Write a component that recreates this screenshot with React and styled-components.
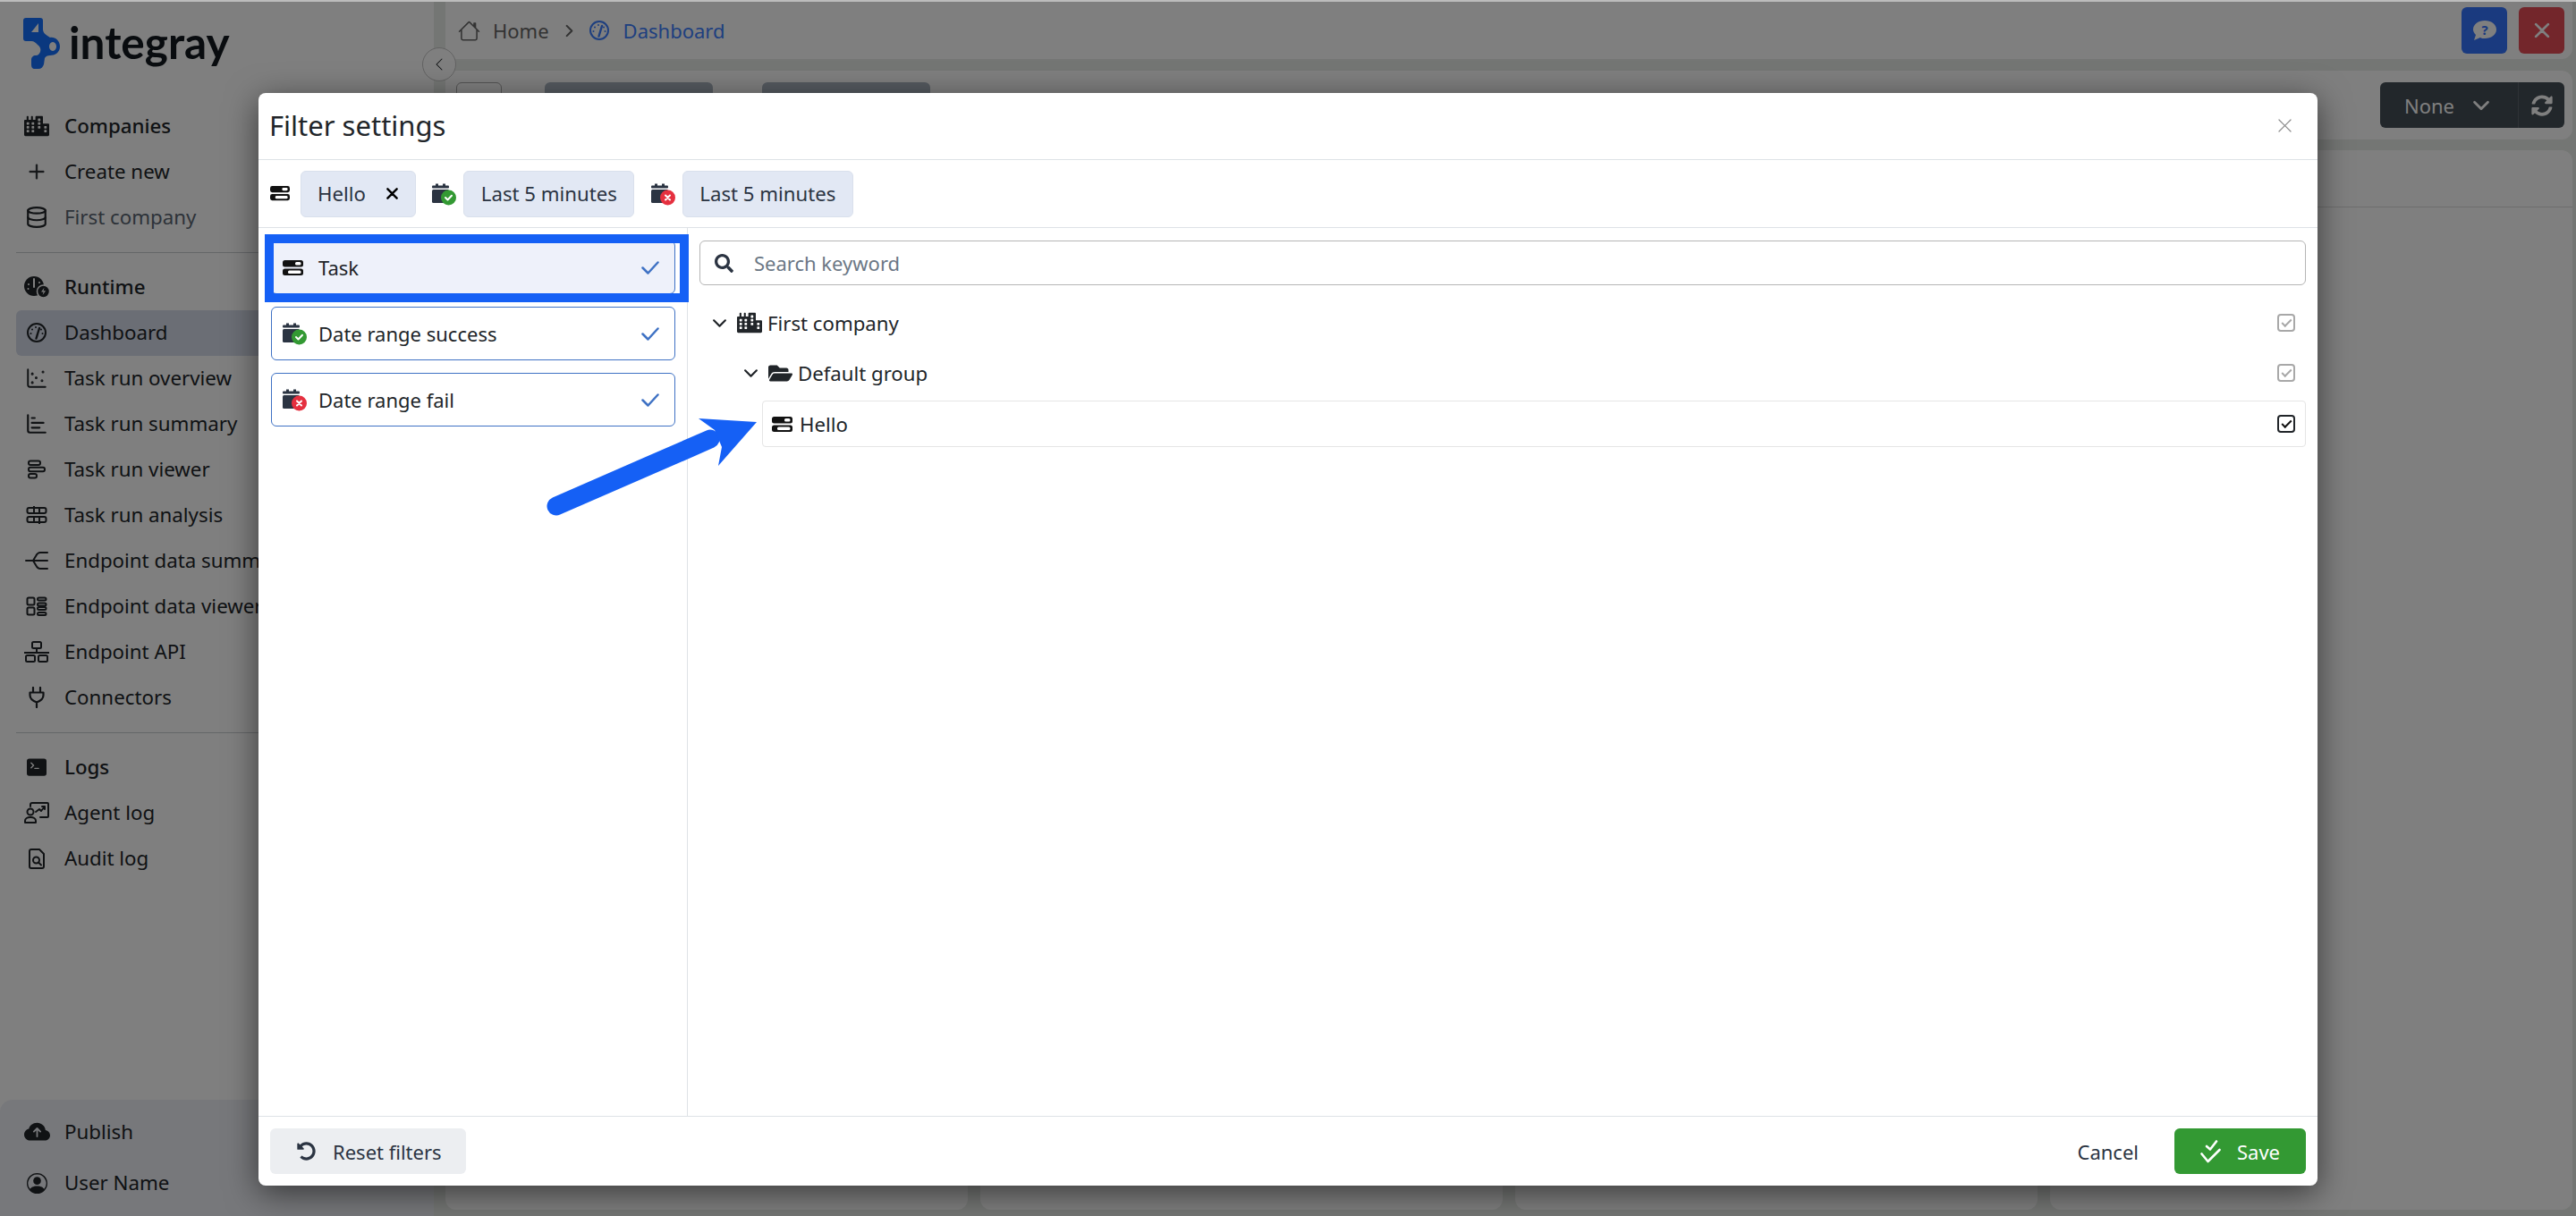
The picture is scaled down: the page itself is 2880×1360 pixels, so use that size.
import styled, { createGlobalStyle } from "styled-components";
import {
  BsPlusLg,
  BsTerminalFill,
  BsCloudArrowUpFill,
  BsPersonCircle,
  BsChevronDown,
  BsChevronLeft,
  BsChevronRight,
  BsXLg,
  BsHouse,
} from "react-icons/bs";
import { FaCity, FaFolderOpen, FaSearch, FaSyncAlt, FaUndoAlt } from "react-icons/fa";
import { LuDatabase } from "react-icons/lu";
import { ChartScatter, ChartBar } from "lucide-react";

const GlobalStyle = createGlobalStyle`
  html, body {
    margin: 0;
    padding: 0;
    height: 100%;
    overflow: hidden;
    font-family: "Noto Sans", "Open Sans", sans-serif;
    color: #212529;
  }
`;

/* drawn icons */

function GaugeIcon({ size = 24 }) {
  return (
    <svg width={size} height={size} viewBox="0 0 24 24" fill="none" stroke="currentColor" strokeWidth="2" strokeLinecap="round">
      <circle cx="12" cy="12" r="10" />
      <path d="M11.5 18.5 15 7" strokeWidth="2.4" />
      <path d="M7 8.5h.01M5.5 13h.01M11 6h.01M18.5 13h.01M17 8.5h.01" />
    </svg>
  );
}

function RuntimeIcon() {
  return (
    <svg width="29" height="25" viewBox="0 0 29 25">
      <circle cx="11" cy="11" r="11" fill="currentColor" />
      <path d="M11 3v9M5 9h.01M4.5 14h.01M17 7h.01" stroke="#fff" strokeWidth="2" strokeLinecap="round" />
      <circle cx="21.5" cy="17" r="7" fill="currentColor" stroke="#fff" strokeWidth="1.5" />
      <path d="M22.5 12.8 19 17.6h2.6l-1 3.4 3.5-4.8h-2.6z" fill="#fff" />
    </svg>
  );
}

function ViewerIcon() {
  return (
    <svg width="22" height="22" viewBox="0 0 22 22" fill="none" stroke="currentColor" strokeWidth="2">
      <rect x="2" y="1.5" width="13" height="4.5" rx="2" />
      <rect x="2" y="8.8" width="18" height="4.5" rx="2" />
      <rect x="2" y="16" width="9" height="4.5" rx="2" />
    </svg>
  );
}

function AnalysisIcon() {
  return (
    <svg width="24" height="22" viewBox="0 0 24 22" fill="none" stroke="currentColor" strokeWidth="2">
      <rect x="1.5" y="3" width="21" height="6" rx="2" />
      <rect x="1.5" y="13" width="21" height="6" rx="2" />
      <path d="M9 1v8M15 3v6M15 13v8M9 13v6" />
    </svg>
  );
}

function ForkIcon() {
  return (
    <svg width="26" height="22" viewBox="0 0 26 22" fill="none" stroke="currentColor" strokeWidth="2" strokeLinecap="round">
      <path d="M1 11h24M25 2h-8c-3 0-4 2-5 4l-3 5 3 5c1 2 2 4 5 4h8" />
    </svg>
  );
}

function TilesIcon() {
  return (
    <svg width="24" height="22" viewBox="0 0 24 22" fill="none" stroke="currentColor" strokeWidth="2">
      <rect x="1.5" y="1.5" width="8" height="8" rx="1.5" />
      <rect x="1.5" y="12.5" width="8" height="8" rx="1.5" />
      <rect x="13" y="1.5" width="9.5" height="3" rx="1.5" />
      <rect x="13" y="7.5" width="9.5" height="3" rx="1.5" />
      <rect x="13" y="12" width="9.5" height="3" rx="1.5" />
      <rect x="13" y="18" width="9.5" height="3" rx="1.5" />
    </svg>
  );
}

function NetworkIcon() {
  return (
    <svg width="28" height="24" viewBox="0 0 28 24" fill="none" stroke="currentColor" strokeWidth="2">
      <rect x="9" y="1" width="10" height="7" rx="1.5" />
      <path d="M14 8v5M0 13h28" />
      <rect x="2" y="16" width="10" height="7" rx="1.5" />
      <rect x="16" y="16" width="10" height="7" rx="1.5" />
    </svg>
  );
}

function PlugIcon() {
  return (
    <svg width="18" height="24" viewBox="0 0 18 24" fill="none" stroke="currentColor" strokeWidth="2.2" strokeLinecap="round" strokeLinejoin="round">
      <path d="M5 1v5M13 1v5M1.5 6.5h15v3c0 3-2 6-7.5 8C3.500 15.500 1.500 12.500 1.500 9.500zM9 17.500V23" />
    </svg>
  );
}

function AgentIcon() {
  return (
    <svg width="28" height="24" viewBox="0 0 28 24" fill="none" stroke="currentColor" strokeWidth="2" strokeLinecap="round" strokeLinejoin="round">
      <path d="M7 5V3a2 2 0 0 1 2-2h17a1 1 0 0 1 1 1v14a1 1 0 0 1-1 1h-8" />
      <path d="m13 11 4-3 2 2 4-5M20 5h3v3" />
      <circle cx="7" cy="11" r="3.500" />
      <path d="M1 23v-2c0-2 2-4 6-4s6 2 6 4v2z" />
    </svg>
  );
}

function AuditIcon() {
  return (
    <svg width="18" height="23" viewBox="0 0 18 23" fill="none" stroke="currentColor" strokeWidth="2" strokeLinecap="round" strokeLinejoin="round">
      <path d="M3 1h9l5 5v14a2 2 0 0 1-2 2H3a2 2 0 0 1-2-2V3a2 2 0 0 1 2-2z" />
      <circle cx="8.500" cy="13" r="3.500" />
      <path d="m11 15.500 3 3" />
    </svg>
  );
}

function TaskIcon({ width = 23 }) {
  return (
    <svg width={width} height={(width * 17) / 23} viewBox="0 0 23 17">
      <rect width="23" height="7.500" rx="2.500" fill="#111" />
      <rect x="14" y="2" width="6.500" height="3.500" rx="1.500" fill="#fff" />
      <rect y="9.500" width="23" height="7.500" rx="2.500" fill="#111" />
      <rect x="6" y="11.500" width="14.500" height="3.500" rx="1.500" fill="#fff" />
    </svg>
  );
}

function DateIcon({ ok }) {
  return (
    <svg width="27" height="26" viewBox="0 0 27 26">
      <path d="M4 1.500h3v3H4zM12 1.500h3v3h-3z" fill="#2b3442" />
      <rect y="3.500" width="19" height="3" rx="1" fill="#2b3442" />
      <rect y="8" width="19" height="15" rx="1.500" fill="#2b3442" />
      <circle cx="18.500" cy="17" r="8.500" fill={ok ? "#339933" : "#e5303f"} />
      {ok ? (
        <path d="m15 17 2.500 2.500 4.500-4.800" fill="none" stroke="#fff" strokeWidth="2" strokeLinecap="round" strokeLinejoin="round" />
      ) : (
        <path d="m16 14.500 5 5M21 14.500l-5 5" fill="none" stroke="#fff" strokeWidth="2" strokeLinecap="round" />
      )}
    </svg>
  );
}

function ThinCheck() {
  return (
    <svg width="20" height="15" viewBox="0 0 20 15" fill="none" stroke="#3f72c4" strokeWidth="2.500" strokeLinecap="round" strokeLinejoin="round">
      <path d="m1.500 7.500 6 6L18.500 1.500" />
    </svg>
  );
}

function DoubleCheck() {
  return (
    <svg width="23" height="26" viewBox="0 0 23 26" fill="none" stroke="#fff" strokeWidth="2.600" strokeLinecap="round" strokeLinejoin="round">
      <path d="m7 7 4 3.500L18 1.500M1.500 15.500 8.500 24 21.500 11" />
    </svg>
  );
}

function HelpIcon() {
  return (
    <svg width="28" height="24" viewBox="0 0 28 24">
      <path d="M14 1c7 0 13 4 13 10s-6 10-13 10c-2 0-4 0-5-1l-7 3 2-6c-2-2-3-4-3-6C1 5 7 1 14 1z" fill="#fff" />
      <text x="14" y="17" textAnchor="middle" fontSize="15" fontWeight="700" fontFamily="Noto Sans" fill="#3474ff">?</text>
    </svg>
  );
}

function Logo() {
  return (
    <svg width="41" height="57" viewBox="0 0 41 57">
      <path
        fillRule="evenodd"
        fill="#1570ff"
        d="M3 0H19a3 3 0 0 1 3 3V13c0 3 2 5 5 7l3 2c5-1 11 3 11 10s-6 10-11 10c-3 0-5 1-6 3l-1 7c-1 3-3 5-6 5h-4c-3 0-4-2-4-5v-5c0-3 2-5 5-5 3 0 4-2 5-4 1-3 0-6-3-8-2-2-4-4-7-4H3c-2 0-3-1-3-3V3c0-2 1-3 3-3ZM17 6v10H9ZM33 27a4 5 0 1 0 .01 0Z"
      />
    </svg>
  );
}

/* data */

const companyRows = [
  { label: "Companies", icon: <FaCity size={28} />, head: true },
  { label: "Create new", icon: <BsPlusLg size={22} strokeWidth={0.6} /> },
  { label: "First company", icon: <LuDatabase size={26} />, muted: true },
];

const runtimeRows = [
  { label: "Runtime", icon: <RuntimeIcon />, head: true },
  { label: "Dashboard", icon: <GaugeIcon />, active: true },
  { label: "Task run overview", icon: <ChartScatter size={26} strokeWidth={1.800} /> },
  { label: "Task run summary", icon: <ChartBar size={26} strokeWidth={2} /> },
  { label: "Task run viewer", icon: <ViewerIcon /> },
  { label: "Task run analysis", icon: <AnalysisIcon /> },
  { label: "Endpoint data summary", icon: <ForkIcon /> },
  { label: "Endpoint data viewer", icon: <TilesIcon /> },
  { label: "Endpoint API", icon: <NetworkIcon /> },
  { label: "Connectors", icon: <PlugIcon /> },
];

const logRows = [
  { label: "Logs", icon: <BsTerminalFill size={22} />, head: true },
  { label: "Agent log", icon: <AgentIcon /> },
  { label: "Audit log", icon: <AuditIcon /> },
];

const filterItems = [
  { label: "Task", icon: <TaskIcon />, active: true },
  { label: "Date range success", icon: <DateIcon ok /> },
  { label: "Date range fail", icon: <DateIcon /> },
];

function NavGroup({ rows }) {
  return rows.map((row) => (
    <NavRow key={row.label} $active={row.active} $head={row.head} $muted={row.muted}>
      <NavIcon>{row.icon}</NavIcon>
      <NavLabel>{row.label}</NavLabel>
    </NavRow>
  ));
}

export default function App() {
  return (
    <>
      <GlobalStyle />
      <Page>
        <Sidebar>
          <Brand>
            <Logo />
            <BrandName>integray</BrandName>
          </Brand>
          <NavGroup rows={companyRows} />
          <NavDivider />
          <NavGroup rows={runtimeRows} />
          <NavDivider />
          <NavGroup rows={logRows} />
          <SidebarFooter>
            <FooterRow>
              <NavIcon><BsCloudArrowUpFill size={29} /></NavIcon>
              <NavLabel>Publish</NavLabel>
            </FooterRow>
            <FooterRow>
              <NavIcon><BsPersonCircle size={23} /></NavIcon>
              <NavLabel>User Name</NavLabel>
            </FooterRow>
          </SidebarFooter>
        </Sidebar>
        <CollapseButton><BsChevronLeft size={16} /></CollapseButton>

        <Main>
          <TopBar>
            <Crumbs>
              <BsHouse size={25} />
              <Crumb>Home</Crumb>
              <BsChevronRight size={15} strokeWidth={1.2} />
              <CrumbCurrent>
                <GaugeIcon size={24} />
                <span>Dashboard</span>
              </CrumbCurrent>
            </Crumbs>
            <TopActions>
              <SquareButton $bg="#3474ff"><HelpIcon /></SquareButton>
              <SquareButton $bg="#e64c56"><BsXLg size={20} strokeWidth={1.2} /></SquareButton>
            </TopActions>
          </TopBar>

          <ToolBar>
            <OutlineButton />
            <GreyButton />
            <GreyButton $gap={7} />
            <RangeGroup>
              <RangeSelect>
                None
                <BsChevronDown size={20} strokeWidth={1.2} />
              </RangeSelect>
              <RefreshButton><FaSyncAlt size={24} /></RefreshButton>
            </RangeGroup>
          </ToolBar>

          <CardGrid>
            {[0, 1, 2, 3].map((i) => (
              <Card key={i}>
                <CardHeader />
              </Card>
            ))}
          </CardGrid>
        </Main>

        <Backdrop>
          <Modal>
            <ModalHeader>
              <ModalTitle>Filter settings</ModalTitle>
              <CloseButton><BsXLg size={19} /></CloseButton>
            </ModalHeader>

            <ChipRow>
              <ChipGroup>
                <TaskIcon width={22} />
                <Chip $tight>
                  Hello
                  <BsXLg size={15} strokeWidth={1.6} color="#000" />
                </Chip>
              </ChipGroup>
              <ChipGroup $tight>
                <DateIcon ok />
                <Chip>Last 5 minutes</Chip>
              </ChipGroup>
              <ChipGroup $tight>
                <DateIcon />
                <Chip>Last 5 minutes</Chip>
              </ChipGroup>
            </ChipRow>

            <ModalBody>
              <FilterColumn>
                {filterItems.map((item) => (
                  <FilterItem key={item.label} $active={item.active}>
                    <FilterIcon>{item.icon}</FilterIcon>
                    <FilterLabel>{item.label}</FilterLabel>
                    <ThinCheck />
                  </FilterItem>
                ))}
              </FilterColumn>

              <TreeColumn>
                <SearchBox>
                  <FaSearch size={21} color="#2b3442" />
                  <SearchPlaceholder>Search keyword</SearchPlaceholder>
                </SearchBox>

                <TreeRow $indent={14}>
                  <BsChevronDown size={17} strokeWidth={1} />
                  <TreeIcon><FaCity size={28} color="#212529" /></TreeIcon>
                  <TreeLabel>First company</TreeLabel>
                  <Checkbox />
                </TreeRow>
                <TreeRow $indent={49}>
                  <BsChevronDown size={17} strokeWidth={1} />
                  <TreeIcon><FaFolderOpen size={27} color="#212529" /></TreeIcon>
                  <TreeLabel>Default group</TreeLabel>
                  <Checkbox />
                </TreeRow>
                <LeafRow>
                  <TaskIcon />
                  <TreeLabel>Hello</TreeLabel>
                  <Checkbox $on />
                </LeafRow>
              </TreeColumn>
            </ModalBody>

            <ModalFooter>
              <ResetButton>
                <FaUndoAlt size={21} />
                Reset filters
              </ResetButton>
              <FooterActions>
                <CancelButton>Cancel</CancelButton>
                <SaveButton>
                  <DoubleCheck />
                  Save
                </SaveButton>
              </FooterActions>
            </ModalFooter>

            <Highlight />
            <ArrowMark viewBox="0 0 260 120" width="260" height="120">
              <path d="M23 104 L195 29" stroke="#1560f5" strokeWidth="21" strokeLinecap="round" fill="none" />
              <path d="M247 10 L182 6 L200 19 L208 38 L204 59 Z" fill="#1560f5" />
            </ArrowMark>
          </Modal>
        </Backdrop>
      </Page>
    </>
  );
}

/* page behind the dialog */

const Page = styled.div`
  position: relative;
  display: flex;
  width: 2880px;
  height: 1360px;
  box-sizing: border-box;
  border-top: 2px solid #bcbcbc;
  overflow: hidden;
  background: #e8ece8;
`;

const Sidebar = styled.aside`
  display: flex;
  flex-direction: column;
  flex: none;
  width: 485px;
  height: 100%;
  box-sizing: border-box;
  padding-left: 18px;
  background: #fff;
  overflow: hidden;
`;

const Brand = styled.div`
  display: flex;
  align-items: flex-start;
  gap: 10px;
  height: 113.500px;
  margin-left: 8px;
  padding-top: 18px;
  box-sizing: border-box;
  flex: none;
`;

const BrandName = styled.span`
  font-family: "Lato", sans-serif;
  font-size: 49.500px;
  font-weight: 700;
  line-height: 1;
  margin-top: 3px;
  color: #12181f;
`;

const NavRow = styled.div`
  display: flex;
  align-items: center;
  gap: 15px;
  flex: none;
  height: 51px;
  padding-left: 7px;
  border-radius: 6px 0 0 6px;
  white-space: nowrap;
  font-size: 22.300px;
  font-weight: ${(p) => (p.$head ? 500 : 400)};
  color: ${(p) => (p.$muted ? "#5b6673" : "#212529")};
  background: ${(p) => (p.$active ? "#d6dcea" : "transparent")};
`;

const NavIcon = styled.span`
  display: flex;
  align-items: center;
  justify-content: center;
  width: 32px;
  flex: none;
  color: #212529;
`;

const NavLabel = styled.span`
  line-height: 1;
`;

const NavDivider = styled.div`
  flex: none;
  height: 1px;
  margin: 13px 0 13px;
  background: #c9ccd0;
`;

const SidebarFooter = styled.div`
  display: flex;
  flex-direction: column;
  margin: auto 0 0 -18px;
  height: 130px;
  padding: 8px 0 0 25px;
  box-sizing: border-box;
  border-radius: 14px 0 0 0;
  background: #eef0f6;
`;

const FooterRow = styled.div`
  display: flex;
  align-items: center;
  gap: 15px;
  height: 57px;
  font-size: 22.300px;
  white-space: nowrap;
`;

const CollapseButton = styled.div`
  position: absolute;
  left: 472px;
  top: 51px;
  display: flex;
  align-items: center;
  justify-content: center;
  width: 38px;
  height: 38px;
  box-sizing: border-box;
  border: 1px solid #c4c4c4;
  border-radius: 50%;
  background: #fff;
`;

const Main = styled.main`
  display: flex;
  flex-direction: column;
  flex: 1;
  min-width: 0;
  padding: 0 4px 7px 13px;
  box-sizing: border-box;
`;

const TopBar = styled.header`
  display: flex;
  align-items: center;
  justify-content: space-between;
  flex: none;
  height: 64px;
  padding: 0 9px 0 14px;
  box-sizing: border-box;
  border-radius: 0 0 12px 12px;
  background: #fff;
`;

const Crumbs = styled.nav`
  display: flex;
  align-items: center;
  gap: 14px;
  font-size: 22px;
  color: #666;
`;

const Crumb = styled.span`
  margin-right: 1px;
`;

const CrumbCurrent = styled.span`
  display: flex;
  align-items: center;
  gap: 15px;
  color: #3d7eff;
`;

const TopActions = styled.div`
  display: flex;
  gap: 13px;
`;

const SquareButton = styled.div`
  display: flex;
  align-items: center;
  justify-content: center;
  width: 51px;
  height: 52px;
  border-radius: 6px;
  color: #fff;
  background: ${(p) => p.$bg};
`;

const ToolBar = styled.div`
  display: flex;
  align-items: center;
  gap: 48px;
  flex: none;
  height: 77px;
  margin-top: 13px;
  padding: 0 9px 0 12px;
  box-sizing: border-box;
  border-radius: 12px;
  background: #fff;
`;

const OutlineButton = styled.div`
  width: 51px;
  height: 51px;
  box-sizing: border-box;
  border: 1px solid #aaa;
  border-radius: 6px;
`;

const GreyButton = styled.div`
  width: 188px;
  height: 51px;
  border-radius: 6px;
  background: #aab4c0;
  margin-left: ${(p) => p.$gap || 0}px;
`;

const RangeGroup = styled.div`
  display: flex;
  margin-left: auto;
  height: 51px;
  color: #fff;
`;

const RangeSelect = styled.div`
  display: flex;
  align-items: center;
  justify-content: center;
  gap: 20px;
  width: 154px;
  padding-right: 4px;
  box-sizing: border-box;
  font-size: 22px;
  border-radius: 6px 0 0 6px;
  background: #454e56;
`;

const RefreshButton = styled.div`
  display: flex;
  align-items: center;
  justify-content: center;
  width: 51px;
  border-left: 1px solid #5c646c;
  border-radius: 0 6px 6px 0;
  background: #454e56;
`;

const CardGrid = styled.div`
  display: grid;
  grid-template-columns: repeat(4, 1fr);
  gap: 14px;
  flex: 1;
  margin-top: 12px;
`;

const Card = styled.section`
  border-radius: 12px;
  background: #fff;
`;

const CardHeader = styled.div`
  height: 63px;
  border-bottom: 1px solid #ddd;
`;

/* dialog */

const Backdrop = styled.div`
  position: absolute;
  inset: 0;
  background: rgba(0, 0, 0, 0.5);
`;

const Modal = styled.div`
  position: absolute;
  left: 289px;
  top: 102px;
  display: flex;
  flex-direction: column;
  width: 2302px;
  height: 1222px;
  border-radius: 8px;
  background: #fff;
  box-shadow: 0 8px 36px rgba(0, 0, 0, 0.55);
`;

const ModalHeader = styled.div`
  display: flex;
  align-items: center;
  justify-content: space-between;
  flex: none;
  height: 75px;
  padding: 0 27px 2px 12px;
  box-sizing: border-box;
  border-bottom: 1px solid #dee2e6;
`;

const ModalTitle = styled.h2`
  margin: 0;
  font-size: 31px;
  font-weight: 400;
  line-height: 1;
  color: #212529;
`;

const CloseButton = styled.span`
  display: flex;
  color: #8a8a8a;
`;

const ChipRow = styled.div`
  display: flex;
  align-items: center;
  flex: none;
  height: 76px;
  padding-left: 13px;
  box-sizing: border-box;
  border-bottom: 1px solid #dee2e6;
`;

const ChipGroup = styled.div`
  display: flex;
  align-items: center;
  gap: ${(p) => (p.$tight ? 8 : 12)}px;
  margin-right: 18.500px;
`;

const Chip = styled.span`
  display: flex;
  align-items: center;
  gap: ${(p) => (p.$tight ? 22 : 0)}px;
  height: 52px;
  padding: 0 ${(p) => (p.$tight ? 18 : 18.5)}px;
  box-sizing: border-box;
  border: 1px solid #d9e0ec;
  border-radius: 6px;
  font-size: 22.200px;
  color: #2b3442;
  background: #e2e8f4;
`;

const ModalBody = styled.div`
  display: flex;
  flex: 1;
  min-height: 0;
`;

const FilterColumn = styled.div`
  display: flex;
  flex-direction: column;
  gap: 14px;
  flex: none;
  width: 480px;
  padding: 14px 13px 0 14px;
  box-sizing: border-box;
  border-right: 1px solid #dee2e6;
`;

const FilterItem = styled.div`
  display: flex;
  align-items: center;
  height: 60px;
  padding: 0 17px 0 12px;
  box-sizing: border-box;
  border: 1px solid #3f72c4;
  border-radius: 6px;
  background: ${(p) => (p.$active ? "#eef1fa" : "#fff")};
`;

const FilterIcon = styled.span`
  display: flex;
  width: 40px;
  flex: none;
`;

const FilterLabel = styled.span`
  flex: 1;
  font-size: 22px;
  color: #212529;
`;

const TreeColumn = styled.div`
  flex: 1;
  min-width: 0;
  padding: 14px 13px 0 13px;
`;

const SearchBox = styled.div`
  display: flex;
  align-items: center;
  gap: 23px;
  height: 50px;
  margin-bottom: 14px;
  padding-left: 16px;
  box-sizing: border-box;
  border: 1px solid #b5b5b5;
  border-radius: 6px;
`;

const SearchPlaceholder = styled.span`
  font-size: 22px;
  color: #6b7785;
`;

const TreeRow = styled.div`
  display: flex;
  align-items: center;
  height: 56px;
  padding: 0 12px 0 ${(p) => p.$indent}px;
  box-sizing: border-box;
`;

const TreeIcon = styled.span`
  display: flex;
  margin: 0 6px 0 11px;
`;

const TreeLabel = styled.span`
  flex: 1;
  font-size: 22.200px;
  color: #212529;
`;

const LeafRow = styled.div`
  display: flex;
  align-items: center;
  gap: 8px;
  height: 52px;
  margin: 3px 0 0 70px;
  padding: 0 11px 0 10px;
  box-sizing: border-box;
  border: 1px solid #e5e5e5;
  border-radius: 4px;
`;

const Checkbox = styled.span`
  display: flex;
  align-items: center;
  justify-content: center;
  width: 20px;
  height: 20px;
  box-sizing: border-box;
  border: 2.5px solid ${(p) => (p.$on ? "#212529" : "#a8a8a8")};
  border-radius: 4px;

  &::after {
    content: "";
    width: 9px;
    height: 4px;
    margin-top: -3px;
    border-left: 2.5px solid ${(p) => (p.$on ? "#111" : "#a8a8a8")};
    border-bottom: 2.5px solid ${(p) => (p.$on ? "#111" : "#a8a8a8")};
    transform: rotate(-45deg);
  }
`;

const ModalFooter = styled.div`
  display: flex;
  align-items: center;
  justify-content: space-between;
  flex: none;
  height: 78px;
  padding: 0 13px;
  box-sizing: border-box;
  border-top: 1px solid #dee2e6;
`;

const ResetButton = styled.div`
  display: flex;
  align-items: center;
  gap: 19px;
  height: 51px;
  padding: 0 27px 0 30px;
  border-radius: 6px;
  font-size: 22px;
  color: #2b3442;
  background: #eceef1;
`;

const FooterActions = styled.div`
  display: flex;
  align-items: center;
  gap: 40px;
`;

const CancelButton = styled.span`
  font-size: 22px;
  color: #2b3442;
`;

const SaveButton = styled.div`
  display: flex;
  align-items: center;
  justify-content: center;
  gap: 18px;
  width: 147px;
  height: 51px;
  border-radius: 6px;
  font-size: 22px;
  color: #fff;
  background: #339933;
`;

/* annotation drawn over the screenshot */

const Highlight = styled.div`
  position: absolute;
  left: 7px;
  top: 158px;
  width: 474px;
  height: 76px;
  box-sizing: border-box;
  border: 10px solid #1560f5;
  pointer-events: none;
`;

const ArrowMark = styled.svg`
  position: absolute;
  left: 310px;
  top: 358px;
  pointer-events: none;
`;
